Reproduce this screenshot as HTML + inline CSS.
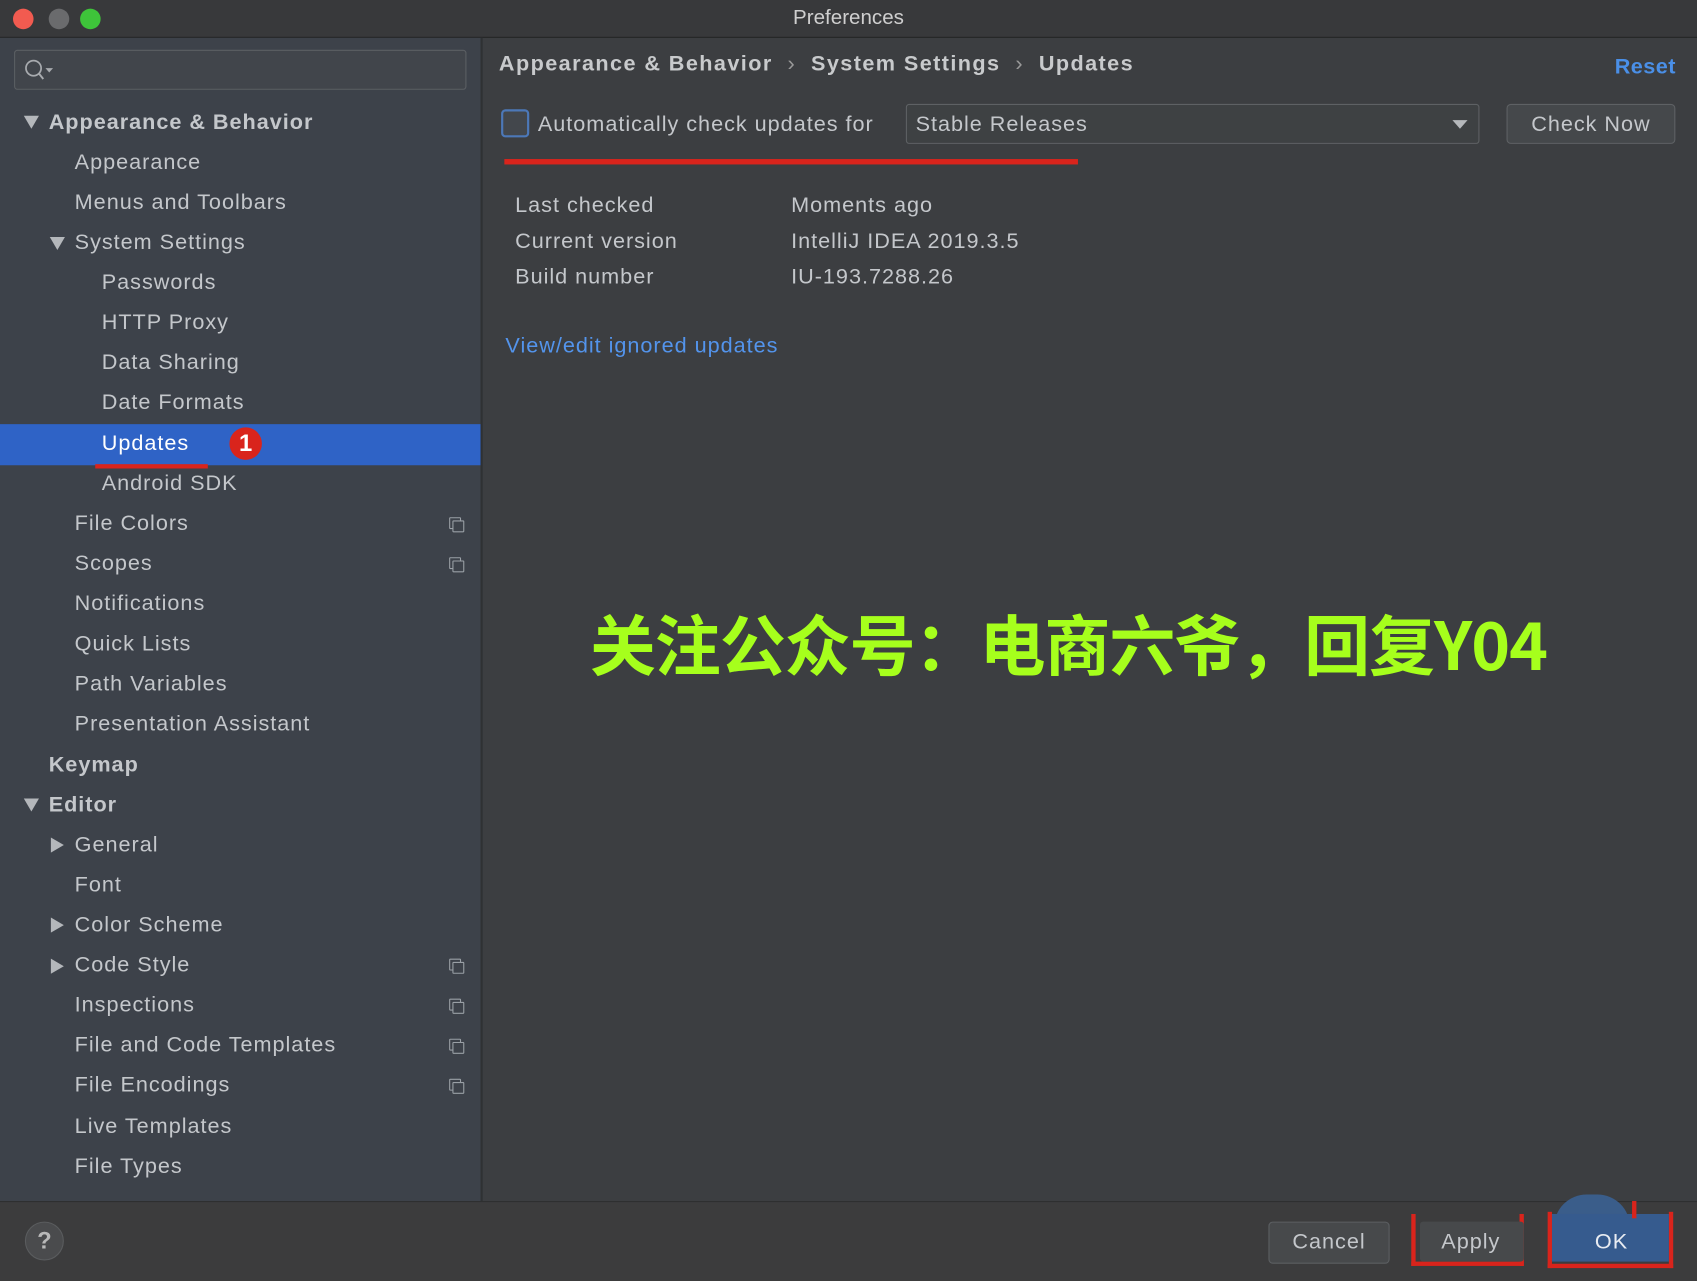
<!DOCTYPE html>
<html><head><meta charset="utf-8"><style>
html,body{margin:0;padding:0;background:#3c3f41;overflow:hidden}
#w{position:absolute;left:0;top:0;width:1568px;height:1183px;transform:scale(1.08227,1.08199);transform-origin:0 0;background:#3c3e41;font-family:"Liberation Sans",sans-serif;color:#c4c7cb}
.a{position:absolute;white-space:nowrap}
.t{font-size:20px;line-height:24px;letter-spacing:0.9px}
.b{font-weight:bold}
.tri{position:absolute;width:0;height:0}
.dn{border-left:7px solid transparent;border-right:7px solid transparent;border-top:12px solid #b4b7bb}
.rt{border-top:7px solid transparent;border-bottom:7px solid transparent;border-left:12px solid #b4b7bb}
.ic{position:absolute;width:9px;height:9px;border:1.5px solid #9aa0a6;border-radius:1px}
</style></head><body><div id="w">
<div class="a" style="left:0;top:0;width:1568px;height:34px;background:#38393b;border-bottom:1px solid #242526"></div>
<div class="a" style="left:12px;top:8px;width:19px;height:19px;border-radius:50%;background:#f25b50"></div>
<div class="a" style="left:45px;top:8px;width:19px;height:19px;border-radius:50%;background:#6a6b6d"></div>
<div class="a" style="left:74px;top:8px;width:19px;height:19px;border-radius:50%;background:#3ec43a"></div>
<div class="a" style="left:0;top:6px;width:1568px;text-align:center;font-size:19px;color:#cfcfcf">Preferences</div>
<div class="a" style="left:0;top:35px;width:444px;height:1075px;background:#3d424a;border-right:2px solid #2f3133"></div>
<div class="a" style="left:13px;top:46px;width:416px;height:35px;border:1.5px solid #5b5f63;border-radius:3px;background:#41454b"></div>
<svg class="a" style="left:20px;top:54px" width="30" height="22"><circle cx="11" cy="9" r="7" fill="none" stroke="#a8abaf" stroke-width="1.6"/><line x1="16" y1="14" x2="20" y2="19" stroke="#a8abaf" stroke-width="1.8"/><path d="M22 9 L29 9 L25.5 13Z" fill="#a8abaf"/></svg>
<div class="a" style="left:0;top:392px;width:444px;height:38px;background:#2f63c6"></div>
<div class="tri dn" style="left:22px;top:107px"></div>
<div class="tri dn" style="left:46px;top:219px"></div>
<div class="tri dn" style="left:22px;top:738px"></div>
<div class="tri rt" style="left:47px;top:774px"></div>
<div class="tri rt" style="left:47px;top:848px"></div>
<div class="tri rt" style="left:47px;top:886px"></div>
<div class="a t b" style="left:45px;top:101px">Appearance &amp; Behavior</div>
<div class="a t" style="left:69px;top:138px">Appearance</div>
<div class="a t" style="left:69px;top:175px">Menus and Toolbars</div>
<div class="a t" style="left:69px;top:212px">System Settings</div>
<div class="a t" style="left:94px;top:249px">Passwords</div>
<div class="a t" style="left:94px;top:286px">HTTP Proxy</div>
<div class="a t" style="left:94px;top:323px">Data Sharing</div>
<div class="a t" style="left:94px;top:360px">Date Formats</div>
<div class="a t" style="left:94px;top:398px;color:#fff">Updates</div>
<div class="a" style="left:212px;top:395px;width:30px;height:30px;border-radius:50%;background:#d9241c;color:#fff;font-size:22px;line-height:30px;text-align:center;font-weight:bold">1</div>
<div class="a" style="left:88px;top:429px;width:104px;height:4px;background:#d9241c"></div>
<div class="a t" style="left:94px;top:435px">Android SDK</div>
<div class="a t" style="left:69px;top:472px">File Colors</div>
<div class="a t" style="left:69px;top:509px">Scopes</div>
<div class="a t" style="left:69px;top:546px">Notifications</div>
<div class="a t" style="left:69px;top:583px">Quick Lists</div>
<div class="a t" style="left:69px;top:620px">Path Variables</div>
<div class="a t" style="left:69px;top:657px">Presentation Assistant</div>
<div class="a t b" style="left:45px;top:695px">Keymap</div>
<div class="a t b" style="left:45px;top:732px">Editor</div>
<div class="a t" style="left:69px;top:769px">General</div>
<div class="a t" style="left:69px;top:806px">Font</div>
<div class="a t" style="left:69px;top:843px">Color Scheme</div>
<div class="a t" style="left:69px;top:880px">Code Style</div>
<div class="a t" style="left:69px;top:917px">Inspections</div>
<div class="a t" style="left:69px;top:954px">File and Code Templates</div>
<div class="a t" style="left:69px;top:991px">File Encodings</div>
<div class="a t" style="left:69px;top:1029px">Live Templates</div>
<div class="a t" style="left:69px;top:1066px">File Types</div>
<div class="ic" style="left:415px;top:478px"></div><div class="ic" style="left:418px;top:481px;background:#3d424a"></div>
<div class="ic" style="left:415px;top:515px"></div><div class="ic" style="left:418px;top:518px;background:#3d424a"></div>
<div class="ic" style="left:415px;top:886px"></div><div class="ic" style="left:418px;top:889px;background:#3d424a"></div>
<div class="ic" style="left:415px;top:923px"></div><div class="ic" style="left:418px;top:926px;background:#3d424a"></div>
<div class="ic" style="left:415px;top:960px"></div><div class="ic" style="left:418px;top:963px;background:#3d424a"></div>
<div class="ic" style="left:415px;top:997px"></div><div class="ic" style="left:418px;top:1000px;background:#3d424a"></div>
<div class="a t b" style="left:461px;top:47px;color:#c8cacc;letter-spacing:1.3px">Appearance &amp; Behavior &nbsp;<span style="font-weight:normal;color:#999">›</span>&nbsp; System Settings &nbsp;<span style="font-weight:normal;color:#999">›</span>&nbsp; Updates</div>
<div class="a t b" style="left:1492px;top:50px;color:#4a8fe7;letter-spacing:0.4px">Reset</div>
<div class="a" style="left:463px;top:101px;width:22px;height:22px;border:2px solid #4c78b8;border-radius:4px;background:#43474c"></div>
<div class="a t" style="left:497px;top:103px">Automatically check updates for</div>
<div class="a" style="left:837px;top:96px;width:528px;height:35px;border:1.5px solid #5e6164;border-radius:3px;background:#3e4143"></div>
<div class="a t" style="left:846px;top:103px">Stable Releases</div>
<div class="tri" style="left:1342px;top:111px;border-left:7px solid transparent;border-right:7px solid transparent;border-top:8px solid #b5b8bb"></div>
<div class="a" style="left:1392px;top:96px;width:154px;height:35px;border:1.5px solid #5e6164;border-radius:4px;background:#45484b"></div>
<div class="a t" style="left:1392px;top:103px;width:156px;text-align:center">Check Now</div>
<div class="a" style="left:466px;top:147px;width:530px;height:5px;background:#d9241c"></div>
<div class="a t" style="left:476px;top:178px">Last checked</div>
<div class="a t" style="left:731px;top:178px">Moments ago</div>
<div class="a t" style="left:476px;top:211px">Current version</div>
<div class="a t" style="left:731px;top:211px">IntelliJ IDEA 2019.3.5</div>
<div class="a t" style="left:476px;top:244px">Build number</div>
<div class="a t" style="left:731px;top:244px">IU-193.7288.26</div>
<div class="a t" style="left:467px;top:308px;color:#5394ec">View/edit ignored updates</div>
<div class="a" style="left:545px;top:557px;font-family:'Noto Sans CJK SC',sans-serif;font-weight:bold;font-size:61px;line-height:72px;color:#a6ff1c;letter-spacing:-1px">关注公众号：电商六爷，回复Y04</div>
<div class="a" style="left:0;top:1110px;width:1568px;height:73px;background:#3c3c3d;border-top:1px solid #2e2f30"></div>
<div class="a" style="left:23px;top:1129px;width:34px;height:34px;border-radius:50%;border:1px solid #5a5c5e;background:#4a4b4d;color:#b8b8b8;font-size:22px;line-height:34px;text-align:center;font-weight:bold">?</div>
<div class="a" style="left:1172px;top:1129px;width:110px;height:37px;border:1.5px solid #5c5f62;border-radius:4px;background:#47494b"></div>
<div class="a t" style="left:1172px;top:1136px;width:112px;text-align:center">Cancel</div>
<div class="a" style="left:1304px;top:1122px;width:104px;height:48px;border:4px solid #d9241c;border-top:none;box-sizing:border-box"></div>
<div class="a" style="left:1312px;top:1129px;width:96px;height:37px;background:#47494b;border-radius:3px"></div>
<div class="a t" style="left:1306px;top:1136px;width:106px;text-align:center">Apply</div>
<div class="a" style="left:1430px;top:1120px;width:116px;height:52px;border:4px solid #d9241c;border-top:none;box-sizing:border-box"></div>
<div class="a" style="left:1436px;top:1104px;width:70px;height:30px;background:#3a5d8a;border-radius:30px 30px 0 0"></div>
<div class="a" style="left:1434px;top:1122px;width:108px;height:44px;background:#365b8e"></div>
<div class="a" style="left:1508px;top:1110px;width:4px;height:16px;background:#d9241c"></div>
<div class="a t" style="left:1434px;top:1136px;width:110px;text-align:center;color:#e8ecf2">OK</div>
</div></body></html>
